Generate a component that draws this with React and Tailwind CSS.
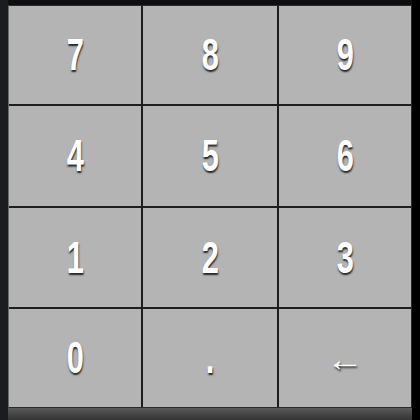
import React from 'react';

const keys = ['7', '8', '9', '4', '5', '6', '1', '2', '3', '0', '.', '←'];

const Key = ({ label }) => {
    const isArrow = label === '←';
    return (
        <div className="bg-[#b4b4b4] flex items-center justify-center">
            <span
                className={`text-white [text-shadow:1px_2px_2px_rgba(0,0,0,0.8)] ${isArrow ? 'text-[34px] font-bold scale-x-[1.1] pt-[2px]' : 'text-[44px] font-bold scale-x-[0.7]'}`}
                style={{ fontFamily: '"Liberation Sans", Arial, sans-serif' }}
            >
                {label}
            </span>
        </div>
    );
};

export default function App() {
    return (
        <div className="w-[420px] h-[420px] bg-[#0b0b0d] flex overflow-hidden">
            {/* left strip */}
            <div className="w-[8px] h-full bg-[#1b1c20]" />
            <div className="flex flex-col w-[404px]">
                <div className="h-[5px] bg-[#0e0e10]" />
                <div className="grid grid-cols-[132px_134px_132px] grid-rows-[98px_100px_99px_98px] gap-[2px] bg-[#1e1e1e] border border-[#2a2a2a] border-l-[#6a6a6a]">
                    {keys.map((k) => (
                        <Key key={k} label={k} />
                    ))}
                </div>
                <div className="flex-1 bg-gradient-to-b from-[#5a5a5a] to-[#333]" />
            </div>
            <div className="flex-1 bg-black" />
        </div>
    );
}
